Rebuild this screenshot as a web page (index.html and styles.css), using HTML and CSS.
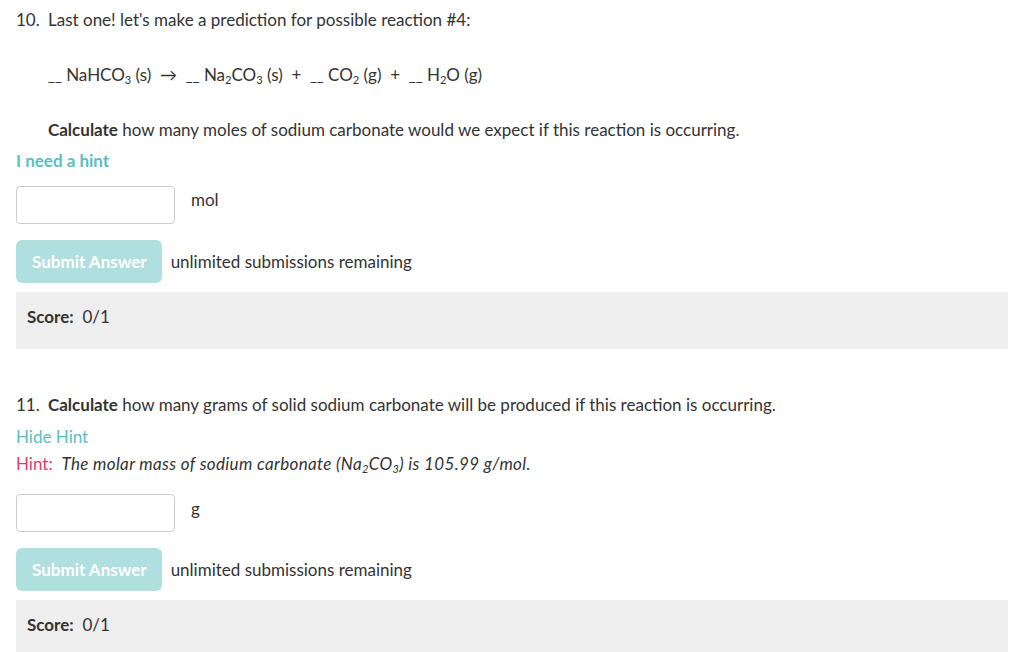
FILE: index.html
```html
<!DOCTYPE html>
<html>
<head>
<meta charset="utf-8">
<link rel="stylesheet" href="styles.css">
</head>
<body>
<div class="page">
  <section class="q q10">
    <div class="line title"><span class="num">10.</span><span>Last one! let's make a prediction for possible reaction #4:</span></div>
    <div class="line eq"><span class="blank">__</span> NaHCO<sub>3</sub> (s) &nbsp;→ &nbsp;<span class="blank">__</span> Na<sub>2</sub>CO<sub>3</sub> (s) &nbsp;+ &nbsp;<span class="blank">__</span> CO<sub>2</sub> (g) &nbsp;+ &nbsp;<span class="blank">__</span> H<sub>2</sub>O (g)</div>
    <div class="line indent calc"><b>Calculate</b> how many moles of sodium carbonate would we expect if this reaction is occurring.</div>
    <div class="line link hintlink">I need a hint</div>
    <div class="answer"><div class="box"></div><span class="unit">mol</span></div>
    <div class="submit"><div class="btn">Submit Answer</div><span class="remain">unlimited submissions remaining</span></div>
    <div class="score"><b>Score:</b>&nbsp; 0/1</div>
  </section>
  <section class="q q11">
    <div class="line title"><span class="num">11.</span><span><b>Calculate</b> how many grams of solid sodium carbonate will be produced if this reaction is occurring.</span></div>
    <div class="line link hide">Hide Hint</div>
    <div class="line hint"><span class="hl">Hint:</span>&nbsp; <i>The molar mass of sodium carbonate (Na<sub>2</sub>CO<sub>3</sub>) is 105.99 g/mol.</i></div>
    <div class="answer a2"><div class="box"></div><span class="unit">g</span></div>
    <div class="submit"><div class="btn">Submit Answer</div><span class="remain">unlimited submissions remaining</span></div>
    <div class="score"><b>Score:</b>&nbsp; 0/1</div>
  </section>
</div>
</body>
</html>
```
FILE: styles.css
```css
html, body { margin: 0; padding: 0; background: #fff; }
body {
  font-family: Lato, "Open Sans", sans-serif;
  font-size: 17px;
  color: #333;
  overflow: hidden;
}
.page { padding: 8px 16px 0 16px; }
.line { line-height: 24px; height: 24px; white-space: nowrap; }
.title { display: flex; }
.title .num { width: 32px; flex: none; }
.eq { margin-top: 31px; padding-left: 32px; }
sub { font-size: 11px; line-height: 0; vertical-align: baseline; position: relative; top: 3px; }
.blank { font-size: 15px; letter-spacing: 0; }
.indent { padding-left: 32px; }
.calc { margin-top: 31px; }
.link { color: #5bbfc0; font-weight: 700; }
.hintlink { margin-top: 7px; }
.answer { display: flex; align-items: flex-start; margin-top: 13px; }
.box {
  width: 157px; height: 36px;
  border: 1px solid #ccc; border-radius: 4px;
  background: #fff;
}
.unit { margin-left: 16px; line-height: 24px; margin-top: 2px; }
.submit { display: flex; align-items: center; margin-top: 16px; }
.btn {
  background: #b0dfdf; color: #fff; font-weight: 700;
  height: 43px; line-height: 43px; padding: 0 15px 0 16px;
  border-radius: 6px; white-space: nowrap;
}
.remain { margin-left: 9px; }
.score {
  margin-top: 9px; background: #eeeeee; height: 57px;
  box-sizing: border-box; padding: 13px 11px; line-height: 24px;
}
.score b { font-weight: 700; }
.q11 { margin-top: 44px; }
.hide { margin-top: 8px; font-weight: 400; }
.hint { margin-top: 3px; }
.hint i { letter-spacing: 0.35px; }
.hl { color: #d93d6c; }
.a2 { margin-top: 18px; }
.a2 .unit { margin-top: 3px; }
.q11 .score { height: 80px; }
```
